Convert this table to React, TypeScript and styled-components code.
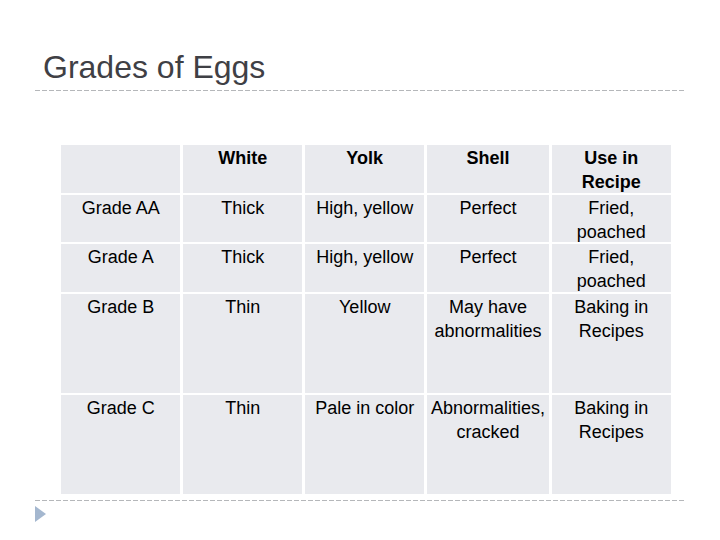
import * as React from "react";
import styled, { createGlobalStyle } from "styled-components";

const GlobalStyle = createGlobalStyle`
  html, body {
    margin: 0;
    padding: 0;
    background: #ffffff;
  }
  body {
    font-family: "Liberation Sans", Arial, sans-serif;
  }
`;

const Slide = styled.div`
  width: 720px;
  height: 540px;
  box-sizing: border-box;
  padding: 49px 35px 0;
  display: flex;
  flex-direction: column;
  background: #ffffff;
`;

const Title = styled.h1`
  margin: 0 0 0 8px;
  font-size: 32px;
  line-height: 36px;
  font-weight: normal;
  color: #3f4045;
`;

const Rule = styled.div<{ $top: number }>`
  margin-top: ${(p) => p.$top}px;
  width: 650px;
  height: 1px;
  background: repeating-linear-gradient(
    to right,
    #b5b7ba 0 5px,
    transparent 5px 7px
  );
`;

const Table = styled.div`
  margin: 54px 0 0 26px;
  width: 610px;
  display: grid;
  grid-template-columns: repeat(5, 1fr);
  grid-template-rows: 48px 47px 48px 99px 99px;
  gap: 2px 2.5px;
`;

const Cell = styled.div<{ $head?: boolean }>`
  background: #e9eaee;
  padding: 1px 4px 0;
  text-align: center;
  font-size: 18px;
  line-height: 24px;
  color: #000000;
  font-weight: ${(p) => (p.$head ? "bold" : "normal")};
  overflow: visible;
  position: relative;
  z-index: 1;
`;

const Bullet = styled.svg`
  margin-top: 5px;
  display: block;
`;

const headers = ["", "White", "Yolk", "Shell", "Use in Recipe"];

const rows = [
  ["Grade AA", "Thick", "High, yellow", "Perfect", "Fried, poached"],
  ["Grade A", "Thick", "High, yellow", "Perfect", "Fried, poached"],
  ["Grade B", "Thin", "Yellow", "May have abnormalities", "Baking in Recipes"],
  ["Grade C", "Thin", "Pale in color", "Abnormalities, cracked", "Baking in Recipes"],
];

const App: React.FunctionComponent = () => {
  return (
    <>
      <GlobalStyle />
      <Slide>
        <Title>Grades of Eggs</Title>
        <Rule $top={5} />
        <Table>
          {headers.map((h, i) => (
            <Cell key={"h" + i} $head>
              {h}
            </Cell>
          ))}
          {rows.map((row, r) =>
            row.map((text, c) => <Cell key={r + "-" + c}>{text}</Cell>)
          )}
        </Table>
        <Rule $top={6} />
        <Bullet width="11" height="16" viewBox="0 0 11 16">
          <polygon points="0,0 11,8 0,16" fill="#a4b7cf" />
        </Bullet>
      </Slide>
    </>
  );
};

export default App;
